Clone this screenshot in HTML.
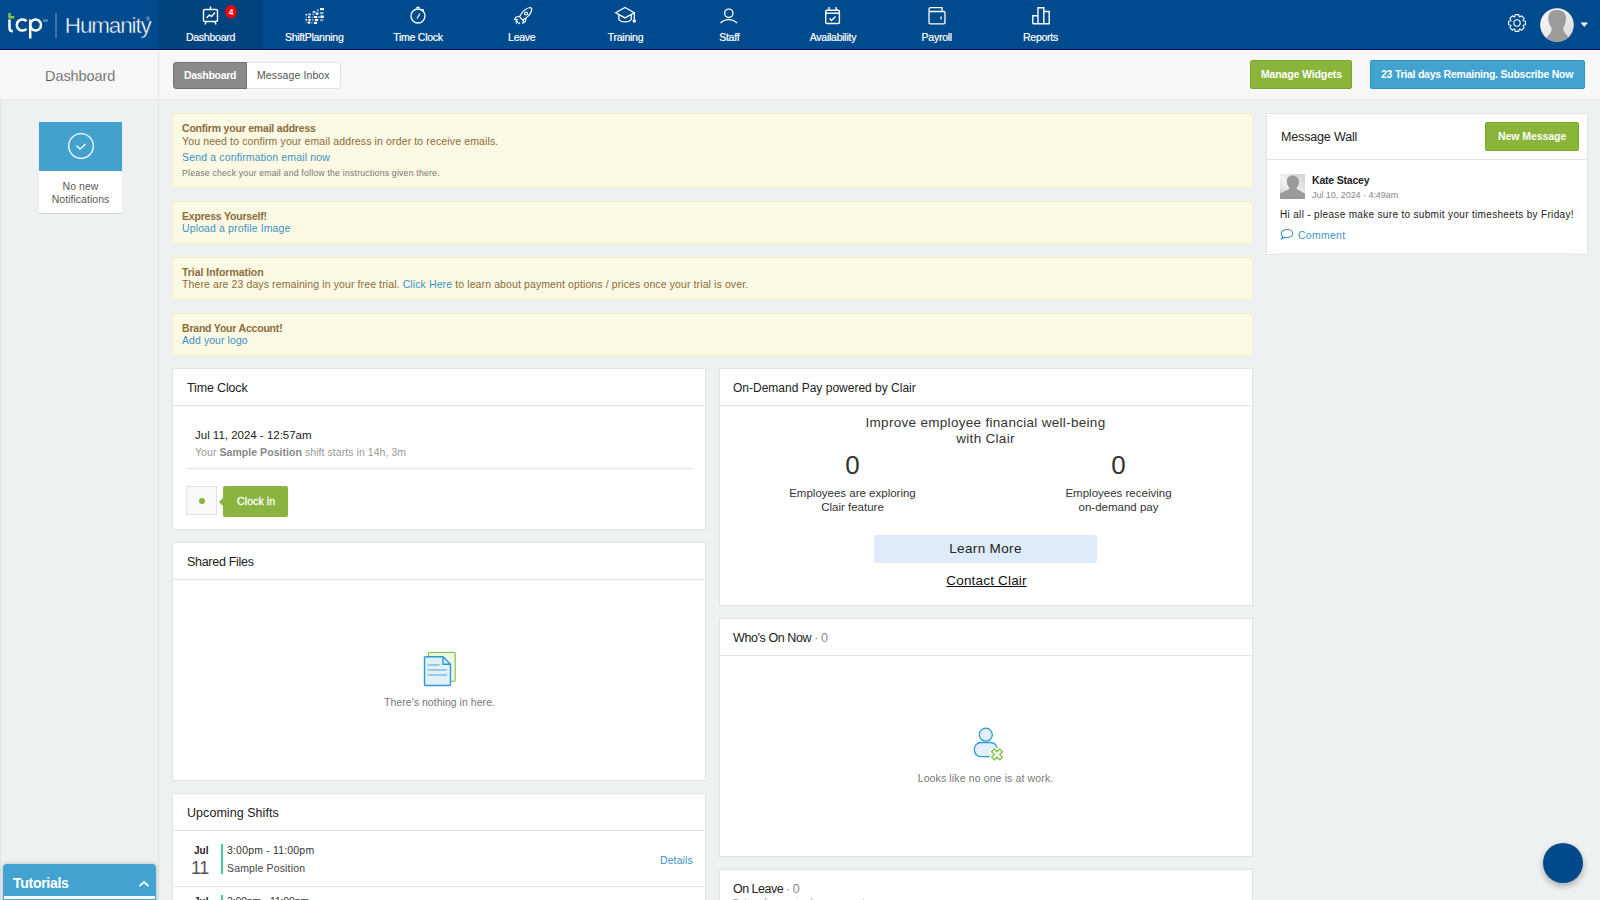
<!DOCTYPE html>
<html><head><meta charset="utf-8">
<style>
*{box-sizing:border-box;margin:0;padding:0}
html,body{width:1600px;height:900px;overflow:hidden}
body{position:relative;background:#eef1f2;font-family:"Liberation Sans",sans-serif;color:#222}
.abs{position:absolute}
.t{position:absolute;white-space:nowrap;line-height:1}
#hdr{left:0;top:0;width:1600px;height:49px;background:#004b8d}
#hdrline{left:0;top:49px;width:1600px;height:1px;background:#00106a}
#sub{left:0;top:50px;width:1600px;height:50px;background:#f7f7f7;border-top:1px solid #fff;border-bottom:1px solid #e6e8ea}
#vline{left:158px;top:51px;width:1px;height:849px;background:#e2e5e7}
.nav{position:absolute;top:0;height:49px;width:103.75px;color:#fff}
.ndiv{position:absolute;top:0;height:49px;width:1px;background:#004581}
.nav .lbl{position:absolute;left:1px;width:103px;text-align:center;top:32px;font-size:10.5px;line-height:10px;letter-spacing:-0.25px;white-space:nowrap;-webkit-text-stroke:0.2px #fff}
.nav svg{position:absolute;top:0;left:0}
.btn{position:absolute;font-size:11px;text-align:center;white-space:nowrap}
.alert{position:absolute;left:172px;width:1081px;background:#fbf8e3;border:1px solid #f8edcf;border-radius:3px;color:#8a6d3b;font-size:10.5px}
.alert .t{left:9px}
.lnk{color:#3d93c4}
.panel{position:absolute;background:#fff;border:1px solid #e1e4e6}
.panel .ph{position:absolute;left:0;right:0;top:0;height:37px;border-bottom:1px solid #e1e4e6}
.pt{position:absolute;left:13px;top:13px;font-size:12.5px;line-height:1;color:#222;white-space:nowrap;letter-spacing:-0.15px}
.gray{color:#888}
.lc>*:not(.ph),.mw>*:not(.ph){margin-left:1px}
.lc .pt,.mw .pt{left:14px}
</style></head><body>
<div id="hdr" class="abs"></div>
<div id="hdrline" class="abs"></div>
<div id="sub" class="abs"></div>
<div id="vline" class="abs"></div>
<div class="abs" style="left:0;top:99px;width:1px;height:801px;background:#e1e3e5"></div>

<!-- logo -->
<svg class="abs" style="left:0;top:0" width="158" height="49" viewBox="0 0 158 49">
  <path d="M8.3 13h2.4v3h3.6v2.4H8.3z" fill="#8cc63f"/>
  <path d="M9.5 19.5v8.5c0 2.2 1.3 3.3 3.3 3.3" fill="none" stroke="#fff" stroke-width="2.5"/>
  <path d="M26.5 21.2a5.6 5.6 0 1 0 0 7.6" fill="none" stroke="#fff" stroke-width="2.5"/>
  <circle cx="35.6" cy="25" r="5.4" fill="none" stroke="#fff" stroke-width="2.5"/>
  <path d="M30.2 19.5v19" fill="none" stroke="#fff" stroke-width="2.5"/>
  <text x="42.5" y="21.5" font-family="Liberation Sans" font-size="3.5" fill="#b8c8dc">SM</text>
  <rect x="55.5" y="13" width="1" height="25" fill="#7f9fc4"/>
  <text x="64.8" y="32.6" font-family="Liberation Sans" font-size="22.5" fill="#fff" stroke="#004b8d" stroke-width="0.45" letter-spacing="-1.15">Humanity</text>
  <text x="146" y="21" font-family="Liberation Sans" font-size="5" fill="#c9d6e6">®</text>
</svg>

<!-- nav -->
<div class="nav" style="left:158.00px;background:#00437f"><div class="lbl">Dashboard</div>
  <svg width="104" height="30"><g fill="none" stroke="#fff" stroke-width="1.4"><rect x="45.5" y="9.5" width="14" height="12" rx="1.5"/><path d="M48.5 18l3-3 2 1.5 3.5-4"/><path d="M52.5 6.5v3M48 22l-1 2.5M57 22l1 2.5"/></g>
  <ellipse cx="73" cy="11.8" rx="5.8" ry="6.8" fill="#f40000"/><text x="73" y="15" font-family="Liberation Sans" font-size="8.5" font-weight="bold" fill="#fff" text-anchor="middle">4</text></svg>
</div>
<div class="nav" style="left:261.75px"><div class="lbl">ShiftPlanning</div>
  <svg width="104" height="30"><g fill="#fff" transform="translate(43.5 0) scale(1.12 1) translate(-43.5 0)">
  <rect x="50" y="11" width="2.2" height="1.8" opacity=".9"/><rect x="53.6" y="9.5" width="1.8" height="1.8" opacity=".6"/><rect x="56.5" y="8" width="3.5" height="2.2"/>
  <rect x="43.5" y="14" width="1.5" height="1.5"/><rect x="46" y="13.5" width="2.2" height="1.8" opacity=".9"/><rect x="49.5" y="13.5" width="1.8" height="1.8" opacity=".5"/><rect x="52.5" y="12.5" width="2.6" height="2.2"/><rect x="56.5" y="12" width="3" height="2.2" opacity=".6"/>
  <rect x="43.5" y="16.5" width="1.2" height="1.5" opacity=".4"/><rect x="45.8" y="16.2" width="2" height="2"/><rect x="49" y="16.5" width="1.2" height="1.5" opacity=".5"/><rect x="51" y="16" width="2.8" height="2"/><rect x="54.5" y="16.2" width="1.8" height="1.8" opacity=".6"/><rect x="56.8" y="15.5" width="3" height="2.5"/>
  <rect x="43.5" y="19" width="1.5" height="1.5"/><rect x="46" y="19" width="2.2" height="1.8" opacity=".9"/><rect x="49.2" y="19" width="1.6" height="1.8" opacity=".5"/><rect x="52" y="18.8" width="2.8" height="2.2"/><rect x="56.5" y="19" width="3" height="2.2" opacity=".5"/>
  <rect x="43.5" y="21.5" width="1.2" height="1.5" opacity=".4"/><rect x="45.5" y="21.5" width="2.2" height="2.2"/><rect x="48.5" y="22" width="1.2" height="1.5" opacity=".5"/><rect x="51" y="21.8" width="2.8" height="2.2"/>
  </g></svg>
</div>
<div class="nav" style="left:365.50px"><div class="lbl">Time Clock</div>
  <svg width="104" height="30"><g fill="none" stroke="#fff" stroke-width="1.3"><circle cx="52" cy="16" r="7"/><path d="M51 18.5l3-5"/></g><path d="M50 8.2a2 1.8 0 0 1 4 0z" fill="#fff"/><circle cx="56.8" cy="10.2" r="1.2" fill="#fff"/></svg>
</div>
<div class="nav" style="left:469.25px"><div class="lbl">Leave</div>
  <svg width="104" height="30"><g fill="none" stroke="#fff" stroke-width="1.2" transform="translate(1 0)"><path d="M60.5 7.5c-4 0.5-7 3-9 6l-2 3.2 3.2 3.2 3.2-2c3-2 5.5-5 6-9z"/><circle cx="56" cy="13.5" r="1.5"/><path d="M49.5 16.5l-3.5 0.5-1.5 2.5 3.5 0.2M53.5 19.5l-0.5 3.5 2.5-1.5 0.3-3.5M48 21.5l-2 2M50 22.5l-1.5 1.5M47 20.5l-1.5 1.2"/></g></svg>
</div>
<div class="nav" style="left:573.00px"><div class="lbl">Training</div>
  <svg width="104" height="30"><g fill="none" stroke="#fff" stroke-width="1.3"><path d="M52 7.5l9.3 5.2-9.3 5.2-9.3-5.2z"/><path d="M45.8 14.8v4.5c2 3.5 10.5 3.5 12.5 0v-4.5"/><path d="M61.3 12.7v7.5"/><circle cx="61.3" cy="21" r="1.1"/></g></svg>
</div>
<div class="nav" style="left:676.75px"><div class="lbl">Staff</div>
  <svg width="104" height="30"><g fill="none" stroke="#fff" stroke-width="1.3"><circle cx="51.8" cy="13.3" r="4.2"/><path d="M43.5 23c4.5-4.5 12-4.5 16.5 0"/></g></svg>
</div>
<div class="nav" style="left:780.50px"><div class="lbl">Availability</div>
  <svg width="104" height="30"><g fill="none" stroke="#fff" stroke-width="1.4"><rect x="44.7" y="10.3" width="13.7" height="13.2" rx="1.3"/><path d="M44.7 13.3h13.7M48 7v3.3M55.2 7v3.3"/><path d="M48.5 18.5l2 2 4-4"/></g></svg>
</div>
<div class="nav" style="left:884.25px"><div class="lbl">Payroll</div>
  <svg width="104" height="30"><g fill="none" stroke="#fff" stroke-width="1.3"><path d="M45 11.5v-2.2c0-1 .7-1.7 1.7-1.7h11.3v3.9"/><rect x="45" y="11.5" width="16" height="12.3" rx="1.2"/></g><rect x="56.4" y="16.5" width="1.2" height="3" fill="#fff"/></svg>
</div>
<div class="nav" style="left:988.00px"><div class="lbl">Reports</div>
  <svg width="104" height="30"><g fill="none" stroke="#fff" stroke-width="1.4"><path d="M44.8 23.7v-8h5.2M50 23.7v-16h5.8v16M55.8 11.5h5.4v12.2H44.8"/></g></svg>
</div>

<div class="ndiv" style="left:262px"></div><div class="ndiv" style="left:366px"></div><div class="ndiv" style="left:469px"></div><div class="ndiv" style="left:573px"></div><div class="ndiv" style="left:677px"></div><div class="ndiv" style="left:780px"></div><div class="ndiv" style="left:884px"></div><div class="ndiv" style="left:988px"></div><div class="ndiv" style="left:1092px"></div>
<!-- header right -->
<svg class="abs" style="left:1504px;top:10px" width="26" height="26" viewBox="0 0 26 26">
  <g fill="none" stroke="#fff" stroke-width="1.1">
  <path stroke-linejoin="round" d="M10.74 6.80 L11.21 4.59 L14.79 4.59 L15.26 6.80 L15.79 7.02 L17.68 5.79 L20.21 8.32 L18.98 10.21 L19.20 10.74 L21.41 11.21 L21.41 14.79 L19.20 15.26 L18.98 15.79 L20.21 17.68 L17.68 20.21 L15.79 18.98 L15.26 19.20 L14.79 21.41 L11.21 21.41 L10.74 19.20 L10.21 18.98 L8.32 20.21 L5.79 17.68 L7.02 15.79 L6.80 15.26 L4.59 14.79 L4.59 11.21 L6.80 10.74 L7.02 10.21 L5.79 8.32 L8.32 5.79 L10.21 7.02Z"/>
  <circle cx="13" cy="13" r="3.2"/></g>
</svg>
<svg class="abs" style="left:1540px;top:8px" width="34" height="34" viewBox="0 0 34 34">
  <defs><linearGradient id="avg" x1="0" y1="0" x2="1" y2="1"><stop offset="0" stop-color="#fafafa"/><stop offset="1" stop-color="#d9d9d9"/></linearGradient>
  <clipPath id="avc"><circle cx="17" cy="17" r="16.8"/></clipPath></defs>
  <circle cx="17" cy="17" r="16.8" fill="url(#avg)"/>
  <g clip-path="url(#avc)"><path d="M17 2C22.5 2 26 4.5 26 10C26 14 25 17 23.5 19.5C22.8 21 23.5 23 25 25L33 35H2L10 25.5C11.5 23.5 12 21 11.3 19.5C9.5 17 8.3 14 8.3 10C8.3 4.5 11.5 2 17 2Z" fill="#9c9c9c"/></g>
</svg>
<svg class="abs" style="left:1580px;top:22px" width="9" height="6"><path d="M0.5 0.5h7.5l-3.75 4.5z" fill="#fff"/></svg>

<!-- subheader -->
<div id="subttl" class="t" style="left:45px;top:68.5px;font-size:14.5px;color:#4a4a4a;letter-spacing:-0.07px;-webkit-text-stroke:0.25px #f7f7f7">Dashboard</div>
<div class="btn" style="left:173px;top:62px;width:74px;height:27px;background:#8a8a8a;border:1px solid #737373;border-radius:3px 0 0 3px"></div>
<div id="bdash" class="t" style="left:184px;top:70px;font-size:10.5px;color:#fff;font-weight:bold;letter-spacing:-0.3px">Dashboard</div>
<div class="btn" style="left:247px;top:62px;width:94px;height:27px;background:#fff;border:1px solid #e2e2e2;border-left:0;border-radius:0 3px 3px 0"></div>
<div id="binbox" class="t" style="left:257px;top:70px;font-size:10.5px;color:#555;letter-spacing:0.11px">Message Inbox</div>
<div class="btn" style="left:1250px;top:60px;width:102px;height:29px;background:#8ab43a;border:1px solid #78a52a;border-radius:2px"></div>
<div id="bmw" class="t" style="left:1261px;top:69px;font-size:10.5px;color:#fff;font-weight:bold;letter-spacing:-0.13px">Manage Widgets</div>
<div class="btn" style="left:1370px;top:60px;width:215px;height:29px;background:#42a3d0;border:1px solid #2d93c4;border-radius:2px"></div>
<div id="bsub" class="t" style="left:1381px;top:69px;font-size:10.5px;color:#fff;font-weight:bold;letter-spacing:-0.24px">23 Trial days Remaining. Subscribe Now</div>

<!-- notifications -->
<div class="abs" style="left:39px;top:122px;width:83px;height:91px;background:#fff;box-shadow:0 1px 1px rgba(0,0,0,0.1)">
  <div class="abs" style="left:0;top:0;width:83px;height:49px;background:#42a1cd"></div>
  <svg class="abs" style="left:28px;top:10px" width="28" height="28"><circle cx="14" cy="14" r="12.3" fill="none" stroke="#fff" stroke-width="1.3"/><path d="M9.5 13.8l3.5 3.2 5.5-5" fill="none" stroke="#fff" stroke-width="1.4"/></svg>
  <div class="abs" style="left:0;top:58px;width:83px;text-align:center;font-size:10.5px;line-height:12.5px;color:#5a5a5a;letter-spacing:0.03px">No new<br>Notifications</div>
</div>

<!-- alerts -->
<div class="alert" style="top:113px;height:75px">
  <div id="a1t" class="t" style="top:9px;font-weight:bold;letter-spacing:-0.2px">Confirm your email address</div>
  <div id="a1b" class="t" style="top:22px;letter-spacing:0.13px">You need to confirm your email address in order to receive emails.</div>
  <div id="a1l" class="t lnk" style="top:38px;letter-spacing:0.15px">Send a confirmation email now</div>
  <div id="a1s" class="t" style="top:55px;font-size:8.7px;color:#777;letter-spacing:0.21px">Please check your email and follow the instructions given there.</div>
</div>
<div class="alert" style="top:201px;height:43px">
  <div id="a2t" class="t" style="top:9px;font-weight:bold;letter-spacing:-0.2px">Express Yourself!</div>
  <div id="a2l" class="t lnk" style="top:21px;letter-spacing:0.13px">Upload a profile Image</div>
</div>
<div class="alert" style="top:257px;height:43px">
  <div id="a3t" class="t" style="top:9px;font-weight:bold;letter-spacing:-0.04px">Trial Information</div>
  <div id="a3b" class="t" style="top:21px;letter-spacing:0.11px">There are 23 days remaining in your free trial. <span class="lnk">Click Here</span> to learn about payment options / prices once your trial is over.</div>
</div>
<div class="alert" style="top:313px;height:43px">
  <div id="a4t" class="t" style="top:9px;font-weight:bold;letter-spacing:-0.2px">Brand Your Account!</div>
  <div id="a4l" class="t lnk" style="top:21px;letter-spacing:0.07px">Add your logo</div>
</div>

<!-- Time clock -->
<div class="panel lc" style="left:172px;top:368px;width:534px;height:162px">
  <div class="ph"><div id="ptc" class="pt">Time Clock</div></div>
  <div id="tcd" class="t" style="left:21px;top:61px;font-size:11.5px;color:#222;letter-spacing:-0.01px">Jul 11, 2024 - 12:57am</div>
  <div id="tcs" class="t" style="left:21px;top:78px;font-size:10.5px;color:#999;letter-spacing:0.06px">Your <b style="color:#888">Sample Position</b> shift starts in 14h, 3m</div>
  <div class="abs" style="left:12px;top:99px;width:507px;height:1px;background:#e5e5e5"></div>
  <div class="abs" style="left:12px;top:117px;width:31px;height:29px;background:#f9f9f9;border:1px solid #e3e3e3"></div>
  <div class="abs" style="left:25px;top:129px;width:6px;height:6px;border-radius:50%;background:#8ab33f"></div>
  <div class="abs" style="left:49px;top:117px;width:65px;height:31px;background:#8ab33f;border-radius:2px"></div>
  <div class="abs" style="left:45px;top:129px;width:0;height:0;border-top:4px solid transparent;border-bottom:4px solid transparent;border-right:4px solid #8ab33f"></div>
  <div id="tci" class="t" style="left:63px;top:127px;font-size:10.5px;color:#fff;letter-spacing:0.11px;-webkit-text-stroke:0.3px #fff">Clock in</div>
</div>

<!-- On-Demand -->
<div class="panel" style="left:719px;top:368px;width:534px;height:238px">
  <div class="ph"><div id="pod" class="pt" style="font-size:12px;letter-spacing:0.00px">On-Demand Pay powered by Clair</div></div>
  <div id="odi" class="abs" style="left:60px;top:46px;width:411px;text-align:center;font-size:13.5px;line-height:16px;color:#333;letter-spacing:0.30px">Improve employee financial well-being<br>with Clair</div>
  <div class="abs" style="left:69px;top:82.5px;width:127px;text-align:center;font-size:26px;line-height:26px;color:#333">0</div>
  <div class="abs" style="left:335px;top:82.5px;width:127px;text-align:center;font-size:26px;line-height:26px;color:#333">0</div>
  <div id="ode1" class="abs" style="left:49px;top:117px;width:167px;text-align:center;font-size:11.5px;line-height:14px;color:#333;letter-spacing:0px">Employees are exploring<br>Clair feature</div>
  <div id="ode2" class="abs" style="left:315px;top:117px;width:167px;text-align:center;font-size:11.5px;line-height:14px;color:#333;letter-spacing:0px">Employees receiving<br>on-demand pay</div>
  <div class="abs" style="left:154px;top:166px;width:223px;height:28px;background:#deebf8;border-radius:3px"></div>
  <div id="odl" class="abs" style="left:154px;top:173px;width:223px;text-align:center;font-size:13.5px;line-height:14px;color:#222;letter-spacing:0.35px">Learn More</div>
  <div id="odc" class="abs" style="left:155px;top:205px;width:223px;text-align:center;font-size:13.5px;line-height:14px;color:#111;letter-spacing:0.18px;text-decoration:underline">Contact Clair</div>
</div>

<!-- Shared Files -->
<div class="panel lc" style="left:172px;top:542px;width:534px;height:239px">
  <div class="ph"><div id="psf" style="letter-spacing:-0.29px" class="pt">Shared Files</div></div>
  <svg class="abs" style="left:249px;top:106px" width="36" height="38" viewBox="0 0 36 38">
    <rect x="5.4" y="3.5" width="26.8" height="28.7" rx="1" fill="#eef6e6" stroke="#7dc142" stroke-width="1.1"/>
    <path d="M1.5 8.8a1 1 0 0 1 1-1h17.5l7.5 7.5v20.2a1 1 0 0 1-1 1h-24a1 1 0 0 1-1-1z" fill="#e3f0f8" stroke="#2a9ad0" stroke-width="1.4"/>
    <path d="M20 7.8v7.5h7.5" fill="none" stroke="#2a9ad0" stroke-width="1.4"/>
    <path d="M4.5 16h12M4.5 21h19.5M4.5 26h19.5" stroke="#4aa6d6" stroke-width="1.2"/>
  </svg>
  <div id="sfe" class="abs" style="left:165px;top:153px;width:201px;text-align:center;font-size:10.5px;line-height:12px;color:#777;letter-spacing:0.04px">There's nothing in here.</div>
</div>

<!-- Who's on -->
<div class="panel" style="left:719px;top:618px;width:534px;height:239px">
  <div class="ph"><div id="pwn" style="letter-spacing:-0.40px" class="pt">Who's On Now <span class="gray">· 0</span></div></div>
  <svg class="abs" style="left:252px;top:105px" width="36" height="40" viewBox="0 0 36 40">
    <circle cx="13.8" cy="10.7" r="6.5" fill="#e3f0f8" stroke="#2a9ad0" stroke-width="1.3"/>
    <rect x="2.4" y="18.5" width="22.9" height="14.2" rx="6.5" fill="#e3f0f8" stroke="#2a9ad0" stroke-width="1.3"/>
    <g transform="translate(25,30.4) rotate(45)">
    <path d="M-2 -5.8H2V-2H5.8V2H2V5.8H-2V2H-5.8V-2H-2Z" fill="#fff" stroke="#fff" stroke-width="4" stroke-linejoin="round"/>
    <path d="M-2 -5.8H2V-2H5.8V2H2V5.8H-2V2H-5.8V-2H-2Z" fill="#eef6e6" stroke="#7dc142" stroke-width="1.3" stroke-linejoin="round"/>
    </g>
  </svg>
  <div id="wne" class="abs" style="left:165px;top:153px;width:201px;text-align:center;font-size:10.5px;line-height:12px;color:#777;letter-spacing:0.13px">Looks like no one is at work.</div>
</div>

<!-- Upcoming -->
<div class="panel lc" style="left:172px;top:793px;width:534px;height:140px">
  <div class="ph"><div id="pus" style="letter-spacing:0.05px" class="pt">Upcoming Shifts</div></div>
  <div class="abs" style="left:0;top:37px;width:531px;height:56px;border-bottom:1px solid #e5e5e5"></div>
  <div class="t" style="left:20px;top:52px;font-size:10px;font-weight:bold;color:#222">Jul</div>
  <div class="t" style="left:17px;top:65px;font-size:18px;color:#555;letter-spacing:-0.5px">11</div>
  <div class="abs" style="left:47px;top:50px;width:1.5px;height:30px;background:#3dd3a0"></div>
  <div id="ust" class="t" style="left:53px;top:51px;font-size:10.5px;color:#333;letter-spacing:0.18px">3:00pm - 11:00pm</div>
  <div id="usp" class="t" style="left:53px;top:69px;font-size:10.5px;color:#444;letter-spacing:0.15px">Sample Position</div>
  <div id="usd" class="t lnk" style="left:486px;top:61px;font-size:10.5px;letter-spacing:0.10px">Details</div>
  <div class="t" style="left:20px;top:103px;font-size:10px;font-weight:bold;color:#222">Jul</div>
  <div class="abs" style="left:47px;top:101px;width:1.5px;height:30px;background:#3dd3a0"></div>
  <div class="t" style="left:53px;top:102px;font-size:10.5px;color:#333;letter-spacing:-0.15px">3:00pm - 11:00pm</div>
</div>

<!-- On leave -->
<div class="panel" style="left:719px;top:869px;width:534px;height:100px">
  <div id="pol" class="pt" style="top:13px;letter-spacing:-0.51px">On Leave <span class="gray">· 0</span></div>
  <div class="t" style="left:13px;top:28px;font-size:9px;color:#999">Dates of upcoming leave requests</div>
</div>

<!-- Message wall -->
<div class="panel mw" style="left:1266px;top:113px;width:322px;height:142px">
  <div class="ph" style="height:46px"><div id="pmw" class="pt" style="top:17px">Message Wall</div></div>
  <div class="abs" style="left:217px;top:8px;width:94px;height:29px;background:#8ab43a;border-radius:2px;border:1px solid #7cab2a"></div>
  <div id="mwn" class="t" style="left:230px;top:17px;font-size:10.5px;color:#fff;font-weight:bold;letter-spacing:-0.06px">New Message</div>
  <svg class="abs" style="left:12px;top:60px" width="26" height="26" viewBox="0 0 26 26">
    <defs><linearGradient id="mg" x1="0" y1="1" x2="1" y2="0"><stop offset="0" stop-color="#c8c8c8"/><stop offset=".45" stop-color="#f4f4f4"/><stop offset="1" stop-color="#cfcfcf"/></linearGradient></defs>
    <rect x="0" y="0" width="25" height="25" fill="url(#mg)"/>
    <path d="M12.6 1.6c3.6 0 6.4 2.3 6.4 5.8 0 2.6-.8 4.6-2.2 6-.5.6-.2 1.4.5 1.8L25 19.5V25H0v-5.5l8.7-4.3c.7-.4 1-1.2.5-1.8-1.4-1.4-2.4-3.4-2.4-6 0-3.5 2.2-5.8 5.8-5.8z" fill="#9a9a9a"/>
  </svg>
  <div id="mwk" class="t" style="left:44px;top:61px;font-size:10.5px;font-weight:bold;color:#222;letter-spacing:-0.2px">Kate Stacey</div>
  <div id="mwd" class="t" style="left:44px;top:77px;font-size:9px;color:#888;letter-spacing:-0.04px">Jul 10, 2024 · 4:49am</div>
  <div id="mwm" class="t" style="left:12px;top:96px;font-size:10px;color:#222;letter-spacing:0.33px">Hi all - please make sure to submit your timesheets by Friday!</div>
  <svg class="abs" style="left:12px;top:114px" width="14" height="13" viewBox="0 0 14 13"><path d="M7 1.5c3.3 0 5.8 1.8 5.8 4s-2.5 4-5.8 4c-.8 0-1.5-.1-2.2-.3L1.5 11l1.2-2.5C1.6 7.8 1.2 6.7 1.2 5.5c0-2.2 2.6-4 5.8-4z" fill="none" stroke="#3d93c4" stroke-width="1.1"/></svg>
  <div id="mwc" class="t lnk" style="left:30px;top:116px;font-size:10.5px;letter-spacing:0.27px">Comment</div>
  <div class="abs" style="left:12px;top:139px;width:294px;height:2px;background:#eceeef"></div>
</div>

<!-- tutorials -->
<div class="abs" style="left:3px;top:864px;width:153px;height:40px;background:#42a3d0;border-radius:4px 4px 0 0;box-shadow:0 0 4px rgba(0,0,0,0.25)"></div>
<div class="abs" style="left:4px;top:896px;width:151px;height:3px;background:#fff"></div>
<div id="tut" class="t" style="left:13px;top:876px;font-size:14px;font-weight:bold;color:#fff;letter-spacing:-0.28px">Tutorials</div>
<svg class="abs" style="left:138px;top:880px" width="12" height="8"><path d="M1.5 6l4.5-4 4.5 4" fill="none" stroke="#fff" stroke-width="1.8"/></svg>
<!-- fab -->
<div class="abs" style="left:1543px;top:843px;width:40px;height:40px;border-radius:50%;background:#004a8c;box-shadow:0 3px 6px rgba(0,0,0,0.3)"></div>
</body></html>
